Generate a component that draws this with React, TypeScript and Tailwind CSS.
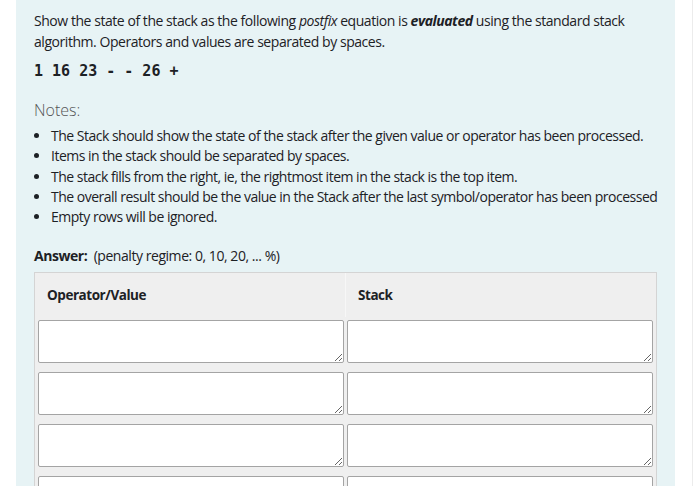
import React from "react";

const NOTES = [
  "The Stack should show the state of the stack after the given value or operator has been processed.",
  "Items in the stack should be separated by spaces.",
  "The stack fills from the right, ie, the rightmost item in the stack is the top item.",
  "The overall result should be the value in the Stack after the last symbol/operator has been processed",
  "Empty rows will be ignored.",
];

const ROWS = [1, 2, 3, 4];

export default function App() {
  return (
    <div className="flex w-[700px] h-[486px] overflow-hidden bg-white text-[#1d2125] font-['Open_Sans',sans-serif] tracking-[-0.45px]">
      <div className="ml-[16px] w-[659px] shrink-0 bg-[#e7f3f5] px-[18px] pt-[10px]">
        <p className="text-[14px] leading-[21px]">
          Show the state of the stack as the following <i>postfix</i> equation is{" "}
          <b>
            <i>evaluated</i>
          </b>{" "}
          using the standard stack algorithm. Operators and values are separated by spaces.
        </p>
        <div className="mt-[9px] whitespace-pre font-['DejaVu_Sans_Mono',monospace] font-bold text-[15px] leading-[20px] tracking-normal">
          1 16 23 - - 26 +
        </div>
        <div className="mt-[18px] text-[16px] leading-[22px] font-light text-[#555] tracking-normal">Notes:</div>
        <ul className="mt-[5px] list-disc pl-[17px] text-[14px] leading-[20.25px] tracking-[-0.5px]">
          {NOTES.map((n) => (
            <li key={n} className="whitespace-nowrap">
              {n}
            </li>
          ))}
        </ul>
        <div className="mt-[19px] text-[14px] leading-[20px]">
          <b>Answer:</b>&nbsp; (penalty regime: 0, 10, 20, ... %)
        </div>
        <div className="mt-[6px] border border-[#d4d4d4] bg-[#efefef]">
          <div className="grid grid-cols-[310px_1fr] h-[44px] items-center text-[13.5px] font-bold">
            <div className="pl-[12px]">Operator/Value</div>
            <div className="pl-[12px] h-full flex items-center border-l border-[#f7f7f7]">Stack</div>
          </div>
          {ROWS.map((r) => (
            <div key={r} className="grid grid-cols-[310px_1fr] pt-[3px] pb-[6px]">
              <div className="pl-[3px] pr-[1px]">
                <textarea className="block w-full h-[43px] bg-white border border-[#a4a4a4] rounded-[2px] resize-y" />
              </div>
              <div className="pl-[2px] pr-[3px]">
                <textarea className="block w-full h-[43px] bg-white border border-[#a4a4a4] rounded-[2px] resize-y" />
              </div>
            </div>
          ))}
        </div>
      </div>
      <div className="ml-[17px] w-px bg-[#ececec]" />
    </div>
  );
}
